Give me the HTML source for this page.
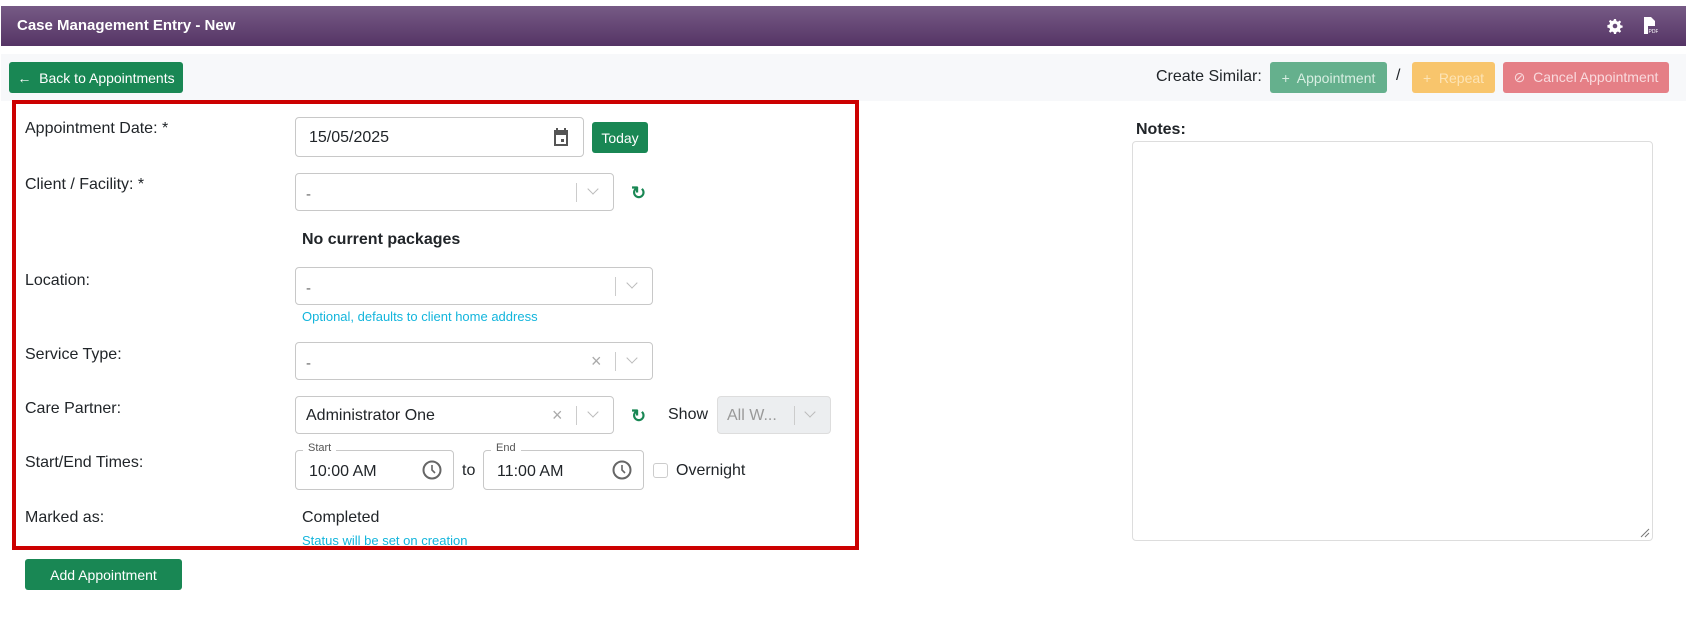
<!DOCTYPE html>
<html><head><style>
*{box-sizing:border-box;margin:0;padding:0}
body{width:1686px;height:634px;position:relative;background:#fff;font-family:"Liberation Sans",sans-serif;color:#212529;overflow:hidden}
.a{position:absolute}
.hdr{left:1px;top:6px;width:1685px;height:40px;background:linear-gradient(#765a85,#553465)}
.bar{left:1px;top:54px;width:1685px;height:47px;background:#f7f8fa}
.btn{position:absolute;border-radius:3px;color:#fff;font-size:14px;display:flex;align-items:center;justify-content:center}
.g{background:#198754}
.lbl{position:absolute;left:25px;font-size:16px}
.inp{position:absolute;border:1px solid #c8c8c8;border-radius:4px;background:#fff}
.sep{position:absolute;top:9px;width:1px;height:19px;background:#ccc}
.chev{position:absolute;top:11px;width:8px;height:8px;border-right:1.5px solid #bbb;border-bottom:1.5px solid #bbb;transform:rotate(45deg)}
.x{position:absolute;top:8px;color:#aaa;font-size:18px}
.dash{position:absolute;left:10px;top:12px;color:#666;font-size:15px}
</style></head><body>
<div class="a hdr"></div>
<div class="a" style="left:17px;top:17px;color:#fff;font-weight:bold;font-size:15px">Case Management Entry - New</div>
<svg class="a" style="left:1607px;top:18px" width="16" height="16" viewBox="0 0 16 16"><path fill="#fff" d="M7 1h2l.4 2 1.6.7 1.7-1.2 1.4 1.4-1.2 1.7.7 1.6 2 .4v2l-2 .4-.7 1.6 1.2 1.7-1.4 1.4-1.7-1.2-1.6.7-.4 2H7l-.4-2-1.6-.7-1.7 1.2-1.4-1.4 1.2-1.7-.7-1.6-2-.4V7l2-.4.7-1.6-1.2-1.7 1.4-1.4 1.7 1.2 1.6-.7z"/><circle cx="8" cy="8" r="2.3" fill="#664a77"/></svg>
<svg class="a" style="left:1644px;top:17px" width="14" height="18" viewBox="0 0 14 18"><path fill="#fff" d="M0 0h7l4 4v5H4v8H0z"/><text x="4.5" y="16" font-size="5" fill="#fff" font-family="Liberation Sans">PDF</text></svg>
<div class="a bar"></div>
<div class="btn g" style="left:9px;top:62px;width:174px;height:31px">&#8592;&nbsp; Back to Appointments</div>
<div class="a" style="left:1156px;top:68px;font-size:16px">Create Similar:</div>
<div class="btn" style="left:1270px;top:62px;width:117px;height:31px;background:#65b08d;color:#d8eee2">+&nbsp; Appointment</div>
<div class="a" style="left:1396px;top:67px;font-size:16px">/</div>
<div class="btn" style="left:1412px;top:62px;width:83px;height:31px;background:#f8c56c;color:#fde4b5">+&nbsp; Repeat</div>
<div class="btn" style="left:1503px;top:62px;width:166px;height:31px;background:#e57f86;color:#f9dadd">&#8856;&nbsp; Cancel Appointment</div>

<div class="a" style="left:12px;top:100px;width:847px;height:450px;border:4px solid #cc0000"></div>
<div class="lbl" style="top:120px">Appointment Date: *</div>
<div class="inp" style="left:295px;top:117px;width:289px;height:40px"><span class="a" style="left:13px;top:11px;font-size:16px">15/05/2025</span>
<svg class="a" style="left:256px;top:9px" width="18" height="20" viewBox="0 0 18 20"><path fill="#555" d="M2 3h14v16H2z M4 8v9h10V8z M4 1h2v3H4z M12 1h2v3h-2z"/><rect x="9" y="12" width="3" height="3" fill="#555"/></svg></div>
<div class="btn g" style="left:592px;top:122px;width:56px;height:31px">Today</div>

<div class="lbl" style="top:176px">Client / Facility: *</div>
<div class="inp" style="left:295px;top:173px;width:319px;height:38px"><span class="dash">-</span><div class="sep" style="left:280px"></div><div class="chev" style="left:293px"></div></div>
<div class="a" style="left:631px;top:183px;color:#198754;font-size:18px;font-weight:bold">&#8635;</div>
<div class="a" style="left:302px;top:231px;font-weight:bold;font-size:16px">No current packages</div>

<div class="lbl" style="top:272px">Location:</div>
<div class="inp" style="left:295px;top:267px;width:358px;height:38px"><span class="dash">-</span><div class="sep" style="left:319px"></div><div class="chev" style="left:332px"></div></div>
<div class="a" style="left:302px;top:309px;font-size:13px;color:#13b5dc">Optional, defaults to client home address</div>

<div class="lbl" style="top:346px">Service Type:</div>
<div class="inp" style="left:295px;top:342px;width:358px;height:38px"><span class="dash">-</span><span class="x" style="left:295px">×</span><div class="sep" style="left:319px"></div><div class="chev" style="left:332px"></div></div>

<div class="lbl" style="top:400px">Care Partner:</div>
<div class="inp" style="left:295px;top:396px;width:319px;height:38px"><span class="a" style="left:10px;top:10px;font-size:16px">Administrator One</span><span class="x" style="left:256px">×</span><div class="sep" style="left:280px"></div><div class="chev" style="left:293px"></div></div>
<div class="a" style="left:631px;top:406px;color:#198754;font-size:18px;font-weight:bold">&#8635;</div>
<div class="a" style="left:668px;top:406px;font-size:16px">Show</div>
<div class="inp" style="left:717px;top:396px;width:114px;height:38px;background:#eceef0;border-color:#ddd"><span class="a" style="left:9px;top:10px;font-size:16px;color:#999">All W...</span><div class="sep" style="left:76px"></div><div class="chev" style="left:88px"></div></div>

<div class="lbl" style="top:454px">Start/End Times:</div>
<div class="inp" style="left:295px;top:450px;width:159px;height:40px"><span class="a" style="left:7px;top:-9px;background:#fff;padding:0 5px;font-size:11px;color:#555">Start</span><span class="a" style="left:13px;top:12px;font-size:16px">10:00 AM</span>
<svg class="a" style="left:126px;top:9px" width="20" height="20" viewBox="0 0 20 20"><circle cx="10" cy="10" r="8.5" fill="none" stroke="#666" stroke-width="2"/><path d="M10 5v5l3 3" fill="none" stroke="#666" stroke-width="1.6"/></svg></div>
<div class="a" style="left:462px;top:462px;font-size:16px">to</div>
<div class="inp" style="left:483px;top:450px;width:161px;height:40px"><span class="a" style="left:7px;top:-9px;background:#fff;padding:0 5px;font-size:11px;color:#555">End</span><span class="a" style="left:13px;top:12px;font-size:16px">11:00 AM</span>
<svg class="a" style="left:128px;top:9px" width="20" height="20" viewBox="0 0 20 20"><circle cx="10" cy="10" r="8.5" fill="none" stroke="#666" stroke-width="2"/><path d="M10 5v5l3 3" fill="none" stroke="#666" stroke-width="1.6"/></svg></div>
<div class="a" style="left:653px;top:463px;width:15px;height:15px;border:1px solid #ccc;border-radius:3px"></div>
<div class="a" style="left:676px;top:462px;font-size:16px">Overnight</div>

<div class="lbl" style="top:509px">Marked as:</div>
<div class="a" style="left:302px;top:509px;font-size:16px">Completed</div>
<div class="a" style="left:302px;top:533px;height:12px;overflow:hidden;font-size:13px;color:#13b5dc">Status will be set on creation</div>

<div class="btn g" style="left:25px;top:559px;width:157px;height:31px">Add Appointment</div>

<div class="a" style="left:1136px;top:121px;font-weight:bold;font-size:16px">Notes:</div>
<div class="a" style="left:1132px;top:141px;width:521px;height:400px;border:1px solid #ddd;border-radius:4px"></div>
<svg class="a" style="left:1640px;top:528px" width="10" height="10"><path d="M9 1L1 9M9 5L5 9" stroke="#777"/></svg>
</body></html>
